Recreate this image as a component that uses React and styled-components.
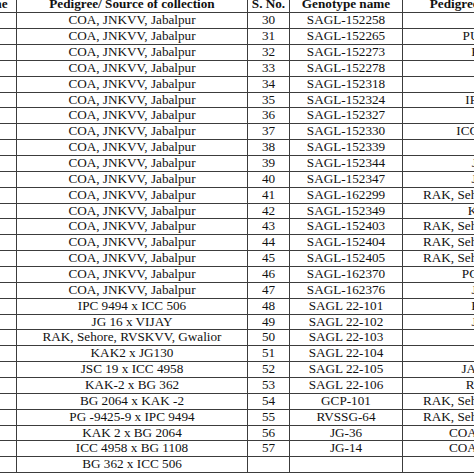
import styled, { createGlobalStyle } from 'styled-components';

const GlobalStyle = createGlobalStyle`
  html, body {
    margin: 0;
    padding: 0;
    background: #ffffff;
    overflow: hidden;
    font-family: "Liberation Serif", "Times New Roman", Times, serif;
  }
`;

// left half of the table: S. No. 1-29 (only the pedigree column is visible)
const leftPedigree = [
    ...Array(18).fill('COA, JNKVV, Jabalpur'),
    'IPC 9494 x ICC 506',
    'JG 16 x VIJAY',
    'RAK, Sehore, RVSKVV, Gwalior',
    'KAK2 x JG130',
    'JSC 19 x ICC 4958',
    'KAK-2 x BG 362',
    'BG 2064 x KAK -2',
    'PG -9425-9 x IPC 9494',
    'KAK 2 x BG 2064',
    'ICC 4958 x BG 1108',
    'BG 362 x ICC 506',
];

// right half: S. No. 30-57
const rightRows = [
    [30, 'SAGL-152258', 'JG 11 x JG 16'],
    [31, 'SAGL-152265', 'PUSA 372 x JG 11'],
    [32, 'SAGL-152273', 'KAK 2 x JG 11'],
    [33, 'SAGL-152278', 'JG 14 x JG 16'],
    [34, 'SAGL-152318', 'JAKI 9218'],
    [35, 'SAGL-152324', 'IPC 9494 x JG 16'],
    [36, 'SAGL-152327', 'JG 16 x JG 14'],
    [37, 'SAGL-152330', 'ICC 4958 x BG 1108'],
    [38, 'SAGL-152339', 'JAKI 9218'],
    [39, 'SAGL-152344', 'JG 11 x JG 315'],
    [40, 'SAGL-152347', 'JG 14 x JG 315'],
    [41, 'SAGL-162299', 'RAK, Sehore, RVSKVV, Gwalior'],
    [42, 'SAGL-152349', 'KAK 2 x JG 130'],
    [43, 'SAGL-152403', 'RAK, Sehore, RVSKVV, Gwalior'],
    [44, 'SAGL-152404', 'RAK, Sehore, RVSKVV, Gwalior'],
    [45, 'SAGL-152405', 'RAK, Sehore, RVSKVV, Gwalior'],
    [46, 'SAGL-162370', 'PG 9425-9 x JG 11'],
    [47, 'SAGL-162376', 'JG 14 x JG 130'],
    [48, 'SAGL 22-101', 'KAK 2 x JG 11'],
    [49, 'SAGL 22-102', 'JG 16 x JG 130'],
    [50, 'SAGL 22-103', 'JG 11 x JG 16'],
    [51, 'SAGL 22-104', 'JG 14 x JG 16'],
    [52, 'SAGL 22-105', 'JAKI 9218 x JG 11'],
    [53, 'SAGL 22-106', 'RVG 202 x JG 11'],
    [54, 'GCP-101', 'RAK, Sehore, RVSKVV, Gwalior'],
    [55, 'RVSSG-64', 'RAK, Sehore, RVSKVV, Gwalior'],
    [56, 'JG-36', 'COA, JNKVV, Jabalpur'],
    [57, 'JG-14', 'COA, JNKVV, Jabalpur'],
];

const headers = ['S. No.', 'Genotype name', 'Pedigree/ Source of collection'];

function App() {
    return (
        <>
            <GlobalStyle />
            <Sheet>
                {[...headers, ...headers].map((h, i) => (
                    <Cell key={'h' + i} $head>
                        {h}
                    </Cell>
                ))}
                {leftPedigree.map((ped, i) => {
                    const right = rightRows[i] || ['', '', ''];
                    return [
                        <Cell key={'a' + i}>{i + 1}</Cell>,
                        <Cell key={'b' + i}></Cell>,
                        <Cell key={'c' + i}>{ped}</Cell>,
                        <Cell key={'d' + i}>{right[0]}</Cell>,
                        <Cell key={'e' + i}>{right[1]}</Cell>,
                        <Cell key={'f' + i}>{right[2]}</Cell>,
                    ];
                })}
            </Sheet>
        </>
    );
}
export default App;

const Sheet = styled.div`
    display: grid;
    grid-template-columns: 40px 106px 231px 42px 113px 220px;
    grid-auto-rows: 15.87px;
    width: max-content;
    margin: -2.67px 0 0 -129px;
    font-family: "Liberation Serif", "Times New Roman", Times, serif;
    font-size: 13.2px;
    color: #111111;
`;

const Cell = styled.div`
    box-sizing: border-box;
    border-right: 1px solid #3c3c3c;
    border-bottom: 1px solid #3c3c3c;
    line-height: 14.87px;
    text-align: center;
    white-space: nowrap;
    overflow: hidden;
    font-weight: ${({ $head }) => ($head ? 700 : 400)};
`;
